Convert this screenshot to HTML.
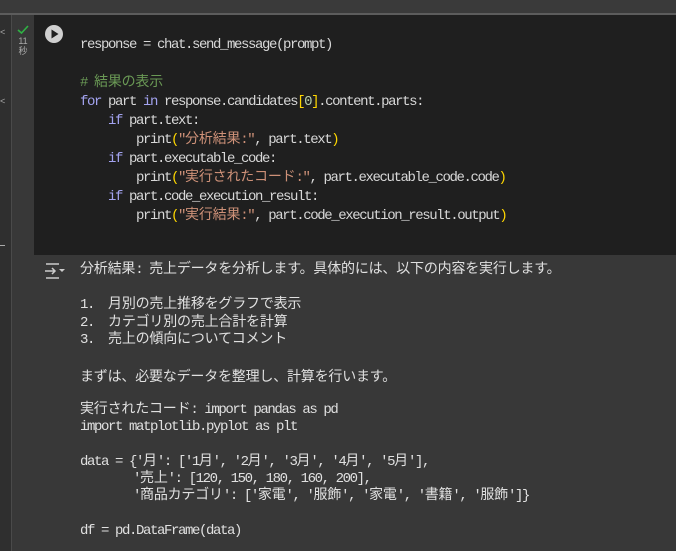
<html><head><style>
body{margin:0;width:676px;height:551px;background:#383838;position:relative;overflow:hidden;font-family:"Liberation Mono","Noto Sans CJK JP",monospace;}
.l{position:absolute;white-space:pre;height:17px;line-height:17px;}
.c{font-size:14px;letter-spacing:-1.4px;color:#d8d8d8;}
.o{font-size:14px;letter-spacing:-1.4px;color:#e0e0e0;}
.j{letter-spacing:-0.2px}
.k{color:#a3a3f0}.s{color:#ce9178}.g{color:#6a9955}.y{color:#ffd700}.n{color:#b5cea8}
</style></head><body>
<div style="position:absolute;left:0;top:0;width:676px;height:13px;background:#3a3a3a"></div>
<div style="position:absolute;left:0;top:13px;width:676px;height:2px;background:#5c5c5c"></div>
<div style="position:absolute;left:0;top:15px;width:11px;height:536px;background:#2f2f2f"></div>
<div style="position:absolute;left:11px;top:15px;width:1px;height:536px;background:#4a4a4a"></div>
<div style="position:absolute;left:34px;top:15px;width:642px;height:240px;background:#1f1f1f"></div>
<div style="position:absolute;left:0;top:28px;color:#aaa;font-size:9px">&lt;</div>
<div style="position:absolute;left:0;top:97px;color:#aaa;font-size:9px">&lt;</div>
<div style="position:absolute;left:0;top:245px;width:5px;height:1px;background:#aaa"></div>
<svg style="position:absolute;left:17px;top:25px" width="12" height="10"><path d="M1 5 L4.5 8 L11 1" stroke="#2fb344" stroke-width="1.6" fill="none"/></svg>
<div style="position:absolute;left:14px;top:36px;width:18px;text-align:center;color:#aaa;font-size:9px;line-height:10px;font-family:'Liberation Sans','Noto Sans CJK JP',sans-serif">11<br>秒</div>
<svg style="position:absolute;left:44px;top:24px" width="20" height="20"><circle cx="10" cy="10" r="9" fill="#d0d0d0"/><path d="M7.5 5.5 L14.5 10 L7.5 14.5Z" fill="#1f1f1f"/></svg>
<div class="l c" style="left:80px;top:37px">response = chat.send_message(prompt)</div>
<div class="l c g" style="left:80px;top:75px"># <span class="j">結果の表示</span></div>
<div class="l c" style="left:80px;top:94px"><span class="k">for</span> part <span class="k">in</span> response.candidates<span class="y">[</span><span class="n">0</span><span class="y">]</span>.content.parts:</div>
<div class="l c" style="left:108px;top:113px"><span class="k">if</span> part.text:</div>
<div class="l c" style="left:136px;top:132px">print<span class="y">(</span><span class="s">"<span class="j">分析結果</span>:"</span>, part.text<span class="y">)</span></div>
<div class="l c" style="left:108px;top:151px"><span class="k">if</span> part.executable_code:</div>
<div class="l c" style="left:136px;top:170px">print<span class="y">(</span><span class="s">"<span class="j">実行されたコード</span>:"</span>, part.executable_code.code<span class="y">)</span></div>
<div class="l c" style="left:108px;top:189px"><span class="k">if</span> part.code_execution_result:</div>
<div class="l c" style="left:136px;top:208px">print<span class="y">(</span><span class="s">"<span class="j">実行結果</span>:"</span>, part.code_execution_result.output<span class="y">)</span></div>
<svg style="position:absolute;left:44px;top:262px" width="22" height="18"><path d="M2 2 H15 M2 16 H15 M1 9 H11 M8 6 L11 9 L8 12" stroke="#ccc" stroke-width="1.5" fill="none"/><path d="M15 7 L21 7 L18 10Z" fill="#ccc"/></svg>
<div class="l o" style="left:80px;top:262px"><span class="j">分析結果</span>: <span class="j">売上データを分析します。具体的には、以下の内容を実行します。</span></div>
<div class="l o" style="left:80px;top:297px">1.  <span class="j">月別の売上推移をグラフで表示</span></div>
<div class="l o" style="left:80px;top:315px">2.  <span class="j">カテゴリ別の売上合計を計算</span></div>
<div class="l o" style="left:80px;top:332px">3.  <span class="j">売上の傾向についてコメント</span></div>
<div class="l o" style="left:80px;top:370px"><span class="j">まずは、必要なデータを整理し、計算を行います。</span></div>
<div class="l o" style="left:80px;top:402px"><span class="j">実行されたコード</span>: import pandas as pd</div>
<div class="l o" style="left:80px;top:419px">import matplotlib.pyplot as plt</div>
<div class="l o" style="left:80px;top:454px">data = {'<span class="j">月</span>': ['1<span class="j">月</span>', '2<span class="j">月</span>', '3<span class="j">月</span>', '4<span class="j">月</span>', '5<span class="j">月</span>'],</div>
<div class="l o" style="left:133px;top:471px">'<span class="j">売上</span>': [120, 150, 180, 160, 200],</div>
<div class="l o" style="left:133px;top:488px">'<span class="j">商品カテゴリ</span>': ['<span class="j">家電</span>', '<span class="j">服飾</span>', '<span class="j">家電</span>', '<span class="j">書籍</span>', '<span class="j">服飾</span>']}</div>
<div class="l o" style="left:80px;top:523px">df = pd.DataFrame(data)</div>
</body></html>
